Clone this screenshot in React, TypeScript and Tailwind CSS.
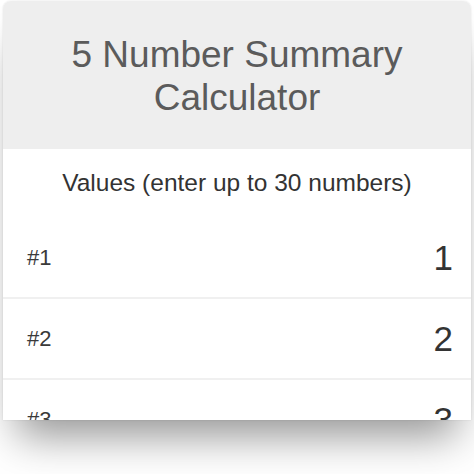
import React from "react";

// ============ Data ============

const VALUES = [1, 2, 3, 4, 5];

// ============ Component ============

const Row: React.FC<{ index: number; value: number }> = ({ index, value }) => {
  return (
    <div className="flex h-[81px] shrink-0 items-center justify-between border-b-2 border-[#f0f0f0] pl-[24px] pr-[18px]">
      <span className="text-[22px] leading-none text-[#3a3a3a]">#{index}</span>
      <span className="text-[35px] leading-none text-[#333333]">{value}</span>
    </div>
  );
};

const App: React.FC = () => {
  return (
    <div className="h-[474px] w-[474px] overflow-hidden bg-white font-['Liberation_Sans',Arial,sans-serif]">
      <div className="mx-[3px] mt-[1px] flex h-[419px] flex-col overflow-hidden rounded-t-[8px] bg-white shadow-[0_30px_40px_-14px_rgba(0,0,0,0.42),0_0_2px_rgba(0,0,0,0.12)]">
        <div className="flex h-[148px] shrink-0 flex-col items-center bg-[#eeeeee] pt-[32px]">
          <h1 className="text-center text-[37px] font-normal leading-[43px] text-[#5b5b5b]">
            5 Number Summary
            <br />
            Calculator
          </h1>
        </div>
        <div className="shrink-0 pb-[21px] pt-[20px] text-center text-[24.5px] leading-[28px] text-[#333333]">
          Values (enter up to 30 numbers)
        </div>
        {VALUES.map((v, i) => (
          <Row key={i} index={i + 1} value={v} />
        ))}
      </div>
    </div>
  );
};

export default App;
